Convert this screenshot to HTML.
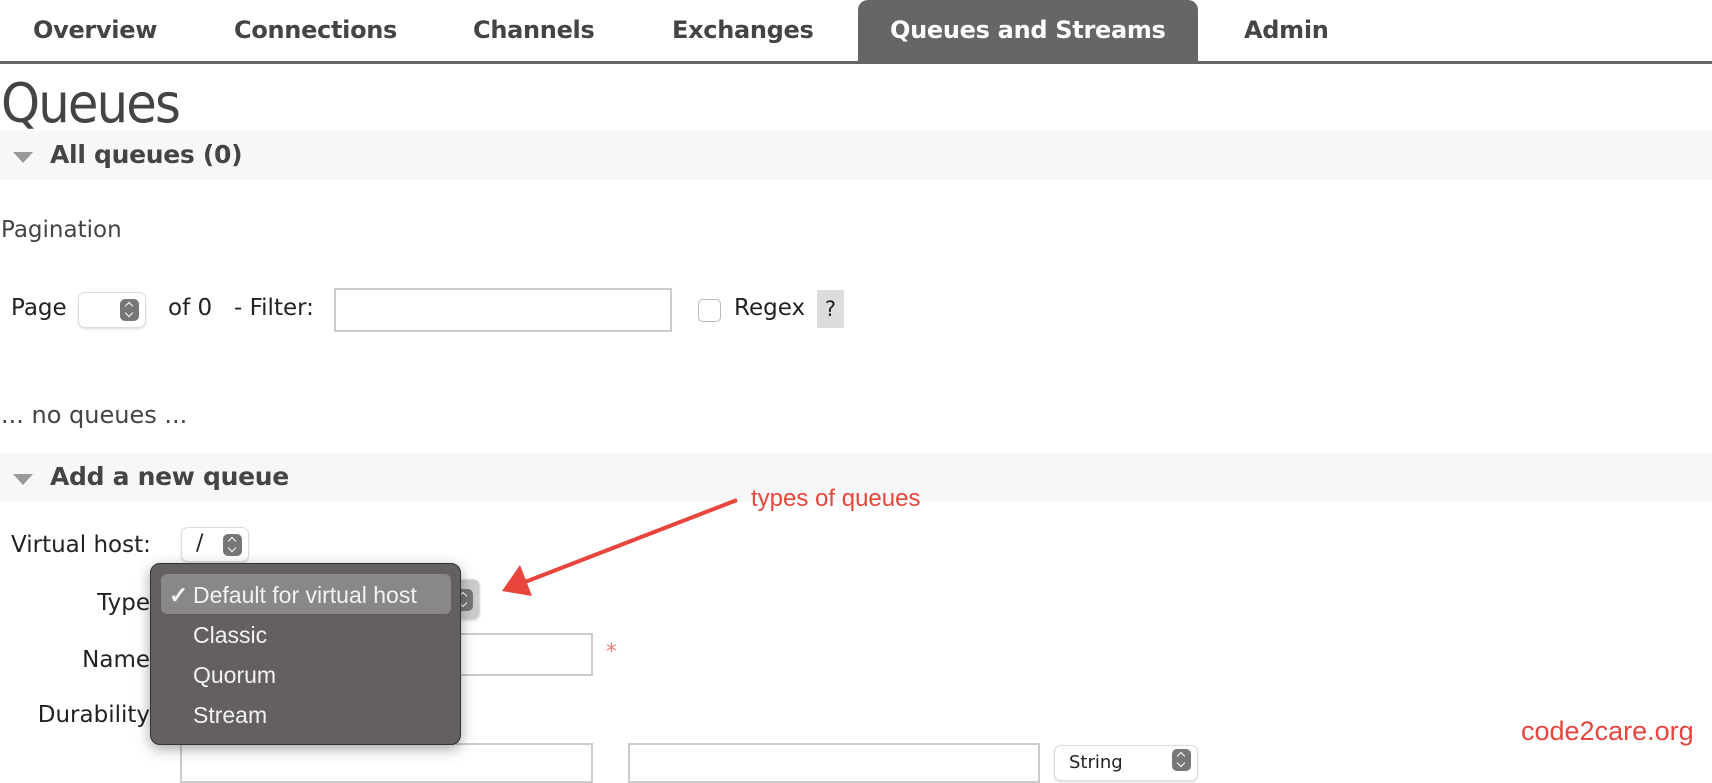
<!DOCTYPE html>
<html><head><meta charset="utf-8"><style>
*{margin:0;padding:0;box-sizing:border-box}
body{width:1712px;height:758px;overflow:hidden;background:#fff;font-family:"DejaVu Sans","Liberation Sans",sans-serif;color:#222;position:relative}
.a{position:absolute;white-space:nowrap}
.nav{font-weight:bold;font-size:24px;color:#444;top:16px;letter-spacing:-0.3px}
.tab{position:absolute;left:858px;top:0;width:340px;height:62px;background:#666;border-radius:10px 10px 0 0}
.line{position:absolute;left:0;top:61px;width:1712px;height:3px;background:#666}
.bar{position:absolute;left:0;width:1712px;height:49px;background:#f7f7f7}
.bar .t{position:absolute;left:50px;top:9px;font-weight:bold;font-size:25px;color:#444;letter-spacing:-0.3px}
.tri{position:absolute;left:13px;top:21px;width:0;height:0;border-left:10px solid transparent;border-right:10px solid transparent;border-top:11px solid #999}
.lab{font-size:23px;color:#222}
.rl{position:absolute;right:1562px;font-size:23px;color:#222;white-space:nowrap}
.inp{position:absolute;border:2px solid #ccc;background:#fff}
.sel{position:absolute;border:1px solid #ddd;border-radius:7px;background:#fff;box-shadow:0 1px 2px rgba(0,0,0,.15)}
.sel i{position:absolute;right:6px;top:50%;margin-top:-11px;width:19px;height:22px;background:#777;border-radius:5px}
.sel i:before{content:"";position:absolute;left:6px;top:4px;width:5px;height:5px;border-left:1.5px solid #fff;border-top:1.5px solid #fff;transform:rotate(45deg)}
.sel i:after{content:"";position:absolute;left:6px;top:11px;width:5px;height:5px;border-right:1.5px solid #fff;border-bottom:1.5px solid #fff;transform:rotate(45deg)}
.menu{position:absolute;left:150px;top:563px;width:311px;height:182px;background:#646060;border:1px solid #333;border-radius:10px;box-shadow:0 4px 14px rgba(0,0,0,.35)}
.hl{position:absolute;left:10px;top:10px;width:290px;height:40px;background:#8a8787;border-radius:6px}
.mi{position:absolute;left:42px;font-size:23px;color:#f2f2f2;font-family:"Liberation Sans",sans-serif}
.red{color:#e8453c;font-family:"Liberation Sans",sans-serif}
</style></head><body>
<div class="tab"></div>
<div class="a nav" style="left:33px">Overview</div>
<div class="a nav" style="left:234px">Connections</div>
<div class="a nav" style="left:473px">Channels</div>
<div class="a nav" style="left:672px">Exchanges</div>
<div class="a nav" style="left:890px;color:#fff">Queues and Streams</div>
<div class="a nav" style="left:1244px">Admin</div>
<div class="line"></div>

<div class="a" style="left:1px;top:72px;font-size:54px;color:#444;font-family:'DejaVu Sans',sans-serif;letter-spacing:-2px;transform:scaleX(.92);transform-origin:left">Queues</div>
<div class="bar" style="top:131px"><div class="tri"></div><div class="t">All queues (0)</div></div>
<div class="a" style="left:1px;top:217px;font-size:23px;color:#444">Pagination</div>

<div class="a lab" style="left:11px;top:295px">Page</div>
<div class="sel" style="left:78px;top:292px;width:68px;height:36px"><i></i></div>
<div class="a lab" style="left:168px;top:295px">of 0</div>
<div class="a lab" style="left:234px;top:295px">- Filter:</div>
<div class="inp" style="left:334px;top:288px;width:338px;height:44px"></div>
<div class="a" style="left:698px;top:299px;width:23px;height:23px;border:1px solid #bbb;border-radius:5px;background:#fff"></div>
<div class="a lab" style="left:734px;top:295px">Regex</div>
<div class="a" style="left:817px;top:290px;width:27px;height:38px;background:#ddd;font-size:21px;text-align:center;line-height:38px">?</div>

<div class="a" style="left:1px;top:401px;font-size:24px;color:#444">... no queues ...</div>
<div class="bar" style="top:453px"><div class="tri"></div><div class="t">Add a new queue</div></div>

<div class="a lab" style="left:11px;top:532px">Virtual host:</div>
<div class="sel" style="left:181px;top:527px;width:68px;height:35px"><span style="position:absolute;left:14px;top:3px;font-size:22px">/</span><i></i></div>
<div class="rl" style="top:590px">Type</div>
<div class="sel" style="left:420px;top:579px;width:60px;height:41px;background:#ccc"><i></i></div>
<div class="rl" style="top:647px">Name</div>
<div class="inp" style="left:420px;top:633px;width:173px;height:43px"></div>
<div class="a" style="left:606px;top:640px;font-size:22px;color:#f08080">*</div>
<div class="rl" style="top:702px">Durability</div>
<div class="inp" style="left:180px;top:743px;width:413px;height:40px"></div>
<div class="inp" style="left:628px;top:743px;width:412px;height:40px"></div>
<div class="sel" style="left:1054px;top:745px;width:144px;height:36px"><span style="position:absolute;left:14px;top:6px;font-size:18px">String</span><i style="margin-top:-14px"></i></div>

<div class="menu"><div class="hl"></div>
<div class="mi" style="left:18px;top:18px;font-weight:bold">✓</div>
<div class="mi" style="top:18px">Default for virtual host</div>
<div class="mi" style="top:58px">Classic</div>
<div class="mi" style="top:98px">Quorum</div>
<div class="mi" style="top:138px">Stream</div>
</div>

<div class="a red" style="left:751px;top:485px;font-size:24px">types of queues</div>
<svg class="a" style="left:0;top:0" width="1712" height="758"><line x1="737" y1="500" x2="525" y2="582" stroke="#e8453c" stroke-width="4"/><polygon points="502,591 520,565 532,596" fill="#e8453c"/></svg>
<div class="a red" style="left:1521px;top:716px;font-size:27px">code2care.org</div>
</body></html>
